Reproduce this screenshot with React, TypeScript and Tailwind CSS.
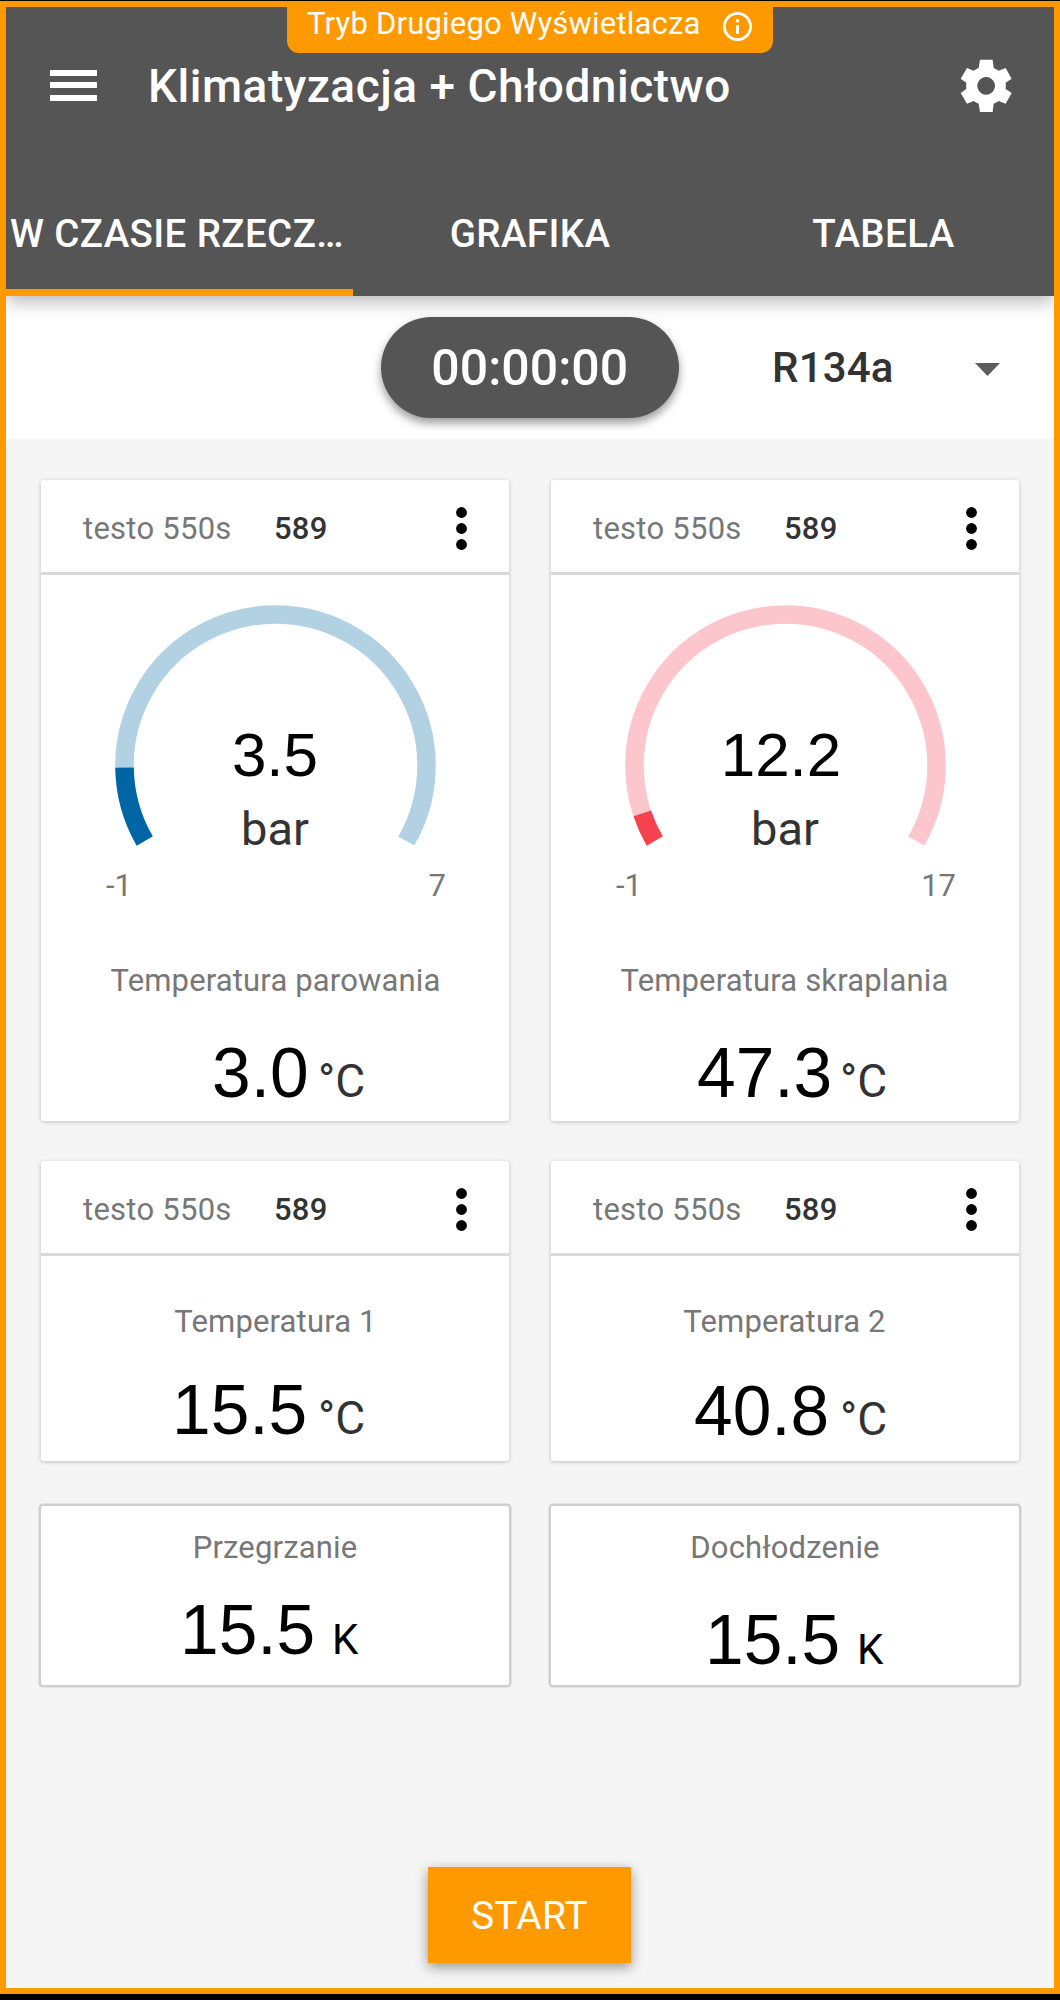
import { MdInfoOutline } from 'react-icons/md'

const point = (deg: number) => {
  const rad = (deg * Math.PI) / 180
  return `${(234.5 + 151 * Math.cos(rad)).toFixed(2)} ${(190.5 + 151 * Math.sin(rad)).toFixed(2)}`
}

const arc = (from: number, to: number) =>
  `M${point(from)} A151 151 0 ${to - from > 180 ? 1 : 0} 1 ${point(to)}`

const GearIcon = () => {
  return (
    <svg className="ml-auto" width="52.3" height="53.7" viewBox="31 26 157 161" fill="currentColor">
      <path
        fillRule="evenodd"
        d="M91 28H129L132 53Q140 56 147 61L168 53L186 85L168 97Q169 106 168 116L186 128L168 160L147 152Q140 157 132 160L129 185H91L87 160Q79 157 72 152L52 160L33 128L50 116Q49 106 50 97L33 85L52 53L72 61Q79 56 87 53ZM109.5 80a26.5 26.5 0 1 0 .01 0Z"
      />
    </svg>
  )
}

const CardHeader = () => {
  return (
    <div className="flex items-center h-[95px] pt-[5px] pl-[42px] pr-[42px] border-b-[3px] border-[#d9d9d9] text-[31px] leading-9 tracking-[0.25px]">
      <span className="w-[191px] text-[#777777]">testo 550s</span>
      <span className="font-medium text-[#333333]">589</span>
      <svg className="ml-auto" width="11" height="43" viewBox="0 0 11 43">
        <circle cx="5.5" cy="5.5" r="5.4" />
        <circle cx="5.5" cy="21.5" r="5.4" />
        <circle cx="5.5" cy="37.5" r="5.4" />
      </svg>
    </div>
  )
}

type GaugeProps = {
  value: string
  valueClass?: string
  min: string
  max: string
  end: number
  track: string
  fill: string
}

const Gauge = ({ value, valueClass = '', min, max, end, track, fill }: GaugeProps) => {
  return (
    <div className="grid h-[328px]">
      <svg className="col-start-1 row-start-1" width="468" height="300" viewBox="0 0 468 300" fill="none" strokeWidth="18.5">
        <path d={arc(150, 390)} stroke={track} />
        <path d={arc(150, end)} stroke={fill} />
      </svg>
      <div className="col-start-1 row-start-1 flex flex-col pt-[148px]">
        <div className={`text-center font-['Liberation_Sans',sans-serif] text-[62px] leading-[64px] text-black ${valueClass}`}>
          {value}
        </div>
        <div className="mt-[14px] text-center text-[47px] leading-[56px] text-[#333333]">bar</div>
        <div className="mt-[11px] pl-[65px] pr-[63px] flex justify-between text-[31px] leading-9 text-[#777777]">
          <span>{min}</span>
          <span>{max}</span>
        </div>
      </div>
    </div>
  )
}

const Label = ({ text, className }: { text: string; className: string }) => {
  return (
    <div className={`text-center text-[31px] leading-9 tracking-[0.15px] text-[#777777] ${className}`}>{text}</div>
  )
}

type ReadingProps = {
  value: string
  unit: string
  className: string
  valueClass: string
  unitClass?: string
}

const Reading = ({ value, unit, className, valueClass, unitClass = 'text-[46px] text-[#333333]' }: ReadingProps) => {
  return (
    <div className={`flex items-baseline ${className}`}>
      <span className={`shrink-0 font-['Liberation_Sans',sans-serif] text-[69.5px] leading-[80px] text-black ${valueClass}`}>
        {value}
      </span>
      <span className={`leading-none ${unitClass}`}>{unit}</span>
    </div>
  )
}

const card = 'bg-white rounded-[3px] shadow-[0_1px_4px_rgba(0,0,0,0.22)]'
const plainCard = 'bg-white rounded-[2px] shadow-[0_0_0_2.5px_#cfcfcf] h-[179px] pt-[24.5px]'

const App = () => {
  return (
    <div className="w-[1060px] h-[2000px] bg-black pt-px font-[Roboto,sans-serif]">
      <div className="relative flex flex-col h-[1993px] border-[6px] border-[#ff9900] bg-[#f5f5f5] overflow-hidden">
        <header className="relative z-10 h-[289px] shrink-0 bg-[#555555] text-white shadow-[0_5px_18px_rgba(0,0,0,0.3)]">
          <div className="flex items-center h-[157px] pl-[44px] pr-[41.5px]">
            <svg width="47" height="31" viewBox="0 0 47 31" fill="currentColor">
              <rect width="47" height="6" />
              <rect y="12" width="47" height="6" />
              <rect y="25" width="47" height="6" />
            </svg>
            <h1 className="ml-[51px] pt-[2px] text-[46px] font-medium tracking-[0.5px] whitespace-nowrap">
              Klimatyzacja + Chłodnictwo
            </h1>
            <GearIcon />
          </div>
          <nav className="grid grid-cols-[347px_1fr_347px] h-[132px] text-[38.5px] leading-[44px] font-medium tracking-[0.4px] text-center">
            <div className="pt-[48px] pl-[4px] text-left whitespace-nowrap border-b-[7px] border-[#ff9900]">
              W CZASIE RZECZ…
            </div>
            <div className="pt-[48px]">GRAFIKA</div>
            <div className="pt-[48px] pl-[6px]">TABELA</div>
          </nav>
        </header>

        <div className="absolute z-20 top-0 left-[281px] flex items-start justify-between w-[486px] h-[46px] pl-[20px] pr-[18.5px] rounded-b-xl bg-[#ff9900] text-white">
          <span className="text-[31px] leading-[34px] tracking-[0.2px] whitespace-nowrap">
            Tryb Drugiego Wyświetlacza
          </span>
          <MdInfoOutline className="mt-[2px]" size={35} />
        </div>

        <div className="flex items-center shrink-0 h-[143px] bg-white font-medium">
          <div className="ml-[374.5px] pt-[2px] flex items-center justify-center w-[298.5px] h-[101px] rounded-full bg-[#555555] text-white text-[50px] shadow-[0_5px_10px_rgba(0,0,0,0.4)]">
            00:00:00
          </div>
          <div className="ml-[93px] flex items-center justify-between w-[228px] text-[42px] tracking-[0.2px] text-[#333333]">
            R134a
            <svg className="mt-1" width="25" height="13" viewBox="0 0 25 13" fill="#5c5c5c">
              <path d="M0 0H25L12.5 13Z" />
            </svg>
          </div>
        </div>

        <main className="grid grid-cols-[468px_468px] gap-x-[42px] pt-[41px] pl-[35px]">
          <div className={`${card} h-[640.5px]`}>
            <CardHeader />
            <Gauge value="3.5" min="-1" max="7" end={179.2} track="#b2d2e4" fill="#0065a5" />
            <Label text="Temperatura parowania" className="mt-[60px] pl-px" />
            <Reading value="3.0" unit="°C" className="mt-[34px] pl-[171px]" valueClass="w-[106px]" />
          </div>
          <div className={`${card} h-[640.5px]`}>
            <CardHeader />
            <Gauge value="12.2" valueClass="pr-[8px]" min="-1" max="17" end={161.5} track="#fcc6cc" fill="#f5424f" />
            <Label text="Temperatura skraplania" className="mt-[60px] pr-px" />
            <Reading value="47.3" unit="°C" className="mt-[34px] pl-[146px]" valueClass="w-[143px]" />
          </div>

          <div className={`${card} h-[300px] mt-[40.5px]`}>
            <CardHeader />
            <Label text="Temperatura 1" className="mt-[48px] pl-px" />
            <Reading value="15.5" unit="°C" className="mt-[30px] pl-[131px]" valueClass="w-[146px]" />
          </div>
          <div className={`${card} h-[300px] mt-[40.5px]`}>
            <CardHeader />
            <Label text="Temperatura 2" className="mt-[48px] pr-px" />
            <Reading value="40.8" unit="°C" className="mt-[31px] pl-[143px]" valueClass="w-[146px]" />
          </div>

          <div className={`${plainCard} mt-[44.5px]`}>
            <Label text="Przegrzanie" className="" />
            <Reading
              value="15.5"
              unit="K"
              className="mt-[24px] pl-[139px]"
              valueClass="w-[152px]"
              unitClass="text-[42px] text-black"
            />
          </div>
          <div className={`${plainCard} mt-[44.5px]`}>
            <Label text="Dochłodzenie" className="" />
            <Reading
              value="15.5"
              unit="K"
              className="mt-[34px] pl-[154px]"
              valueClass="w-[152px]"
              unitClass="text-[42px] text-black"
            />
          </div>
        </main>

        <button className="mt-[182.5px] ml-[422px] w-[203px] h-24 pt-[2px] shrink-0 bg-[#ff9900] text-white text-[39px] tracking-[0.2px] shadow-[0_4px_12px_rgba(0,0,0,0.4)]">
          START
        </button>
      </div>
    </div>
  )
}
export default App
